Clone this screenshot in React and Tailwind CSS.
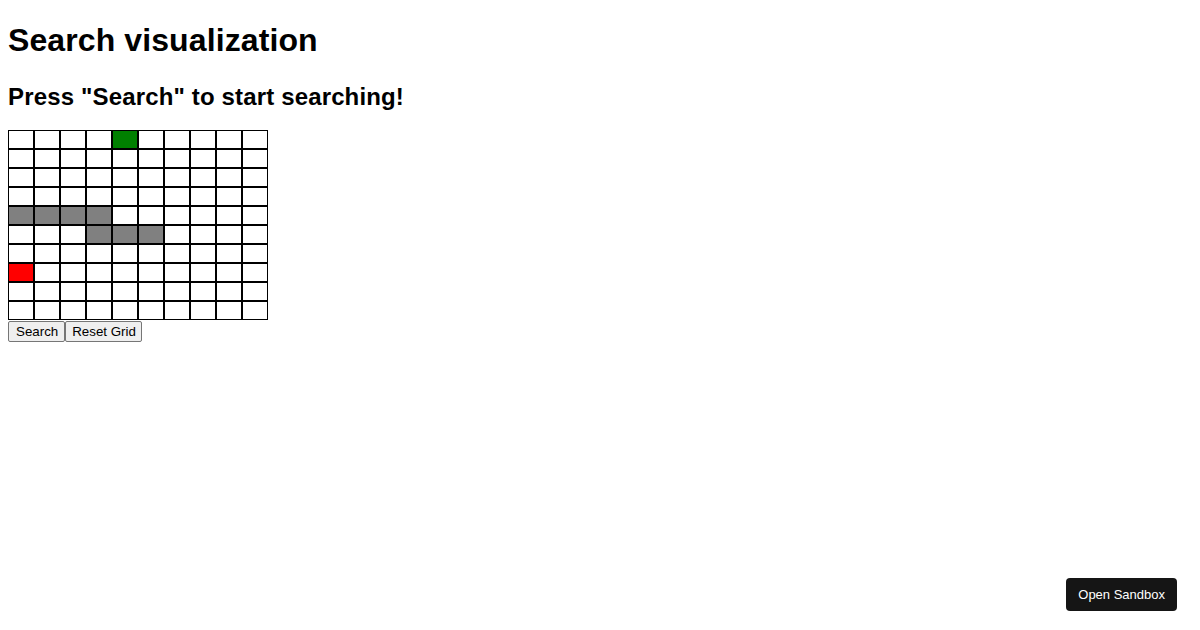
import React from 'react';

const ROWS = 10;
const COLS = 10;

// cell colours keyed by "row-col"
const special = {
    '0-4': 'bg-[#008000]',
    '4-0': 'bg-[#808080]',
    '4-1': 'bg-[#808080]',
    '4-2': 'bg-[#808080]',
    '4-3': 'bg-[#808080]',
    '5-3': 'bg-[#808080]',
    '5-4': 'bg-[#808080]',
    '5-5': 'bg-[#808080]',
    '7-0': 'bg-[#ff0000]',
};

const Grid = () => (
    <div className="flex flex-col">
        {Array.from({ length: ROWS }).map((_, r) => (
            <div key={r} className="flex">
                {Array.from({ length: COLS }).map((_, c) => (
                    <div
                        key={c}
                        className={`w-[26px] h-[19px] border border-black ${special[`${r}-${c}`] || 'bg-white'}`}
                    />
                ))}
            </div>
        ))}
    </div>
);

const App = () => {
    return (
        <div className="min-h-[630px] bg-white text-black p-2 font-['Liberation_Sans',Arial,sans-serif]">
            <h1 className="text-[32px] font-bold leading-[37px] mt-[14px] tracking-[0.1px]">Search visualization</h1>
            <h2 className="text-[24px] font-bold leading-[28px] mt-[24px] mb-[19px] tracking-[0.15px]">Press "Search" to start searching!</h2>

            <Grid />

            <div className="flex mt-px">
                <button className="pl-[7px] pr-[6px] py-[1px] text-[13.33px] leading-[17px] bg-[#efefef] border border-[#767676] rounded-[2px]">
                    Search
                </button>
                <button className="pl-[6px] pr-[5px] py-[1px] text-[13.33px] leading-[17px] bg-[#efefef] border border-[#767676] rounded-[2px]">
                    Reset Grid
                </button>
            </div>

            {/* floating sandbox link */}
            <button className="fixed right-[23px] bottom-[19px] h-[33px] px-[12px] rounded-[4px] bg-[#151515] text-white text-[13px] font-['Liberation_Sans',sans-serif]">
                Open Sandbox
            </button>
        </div>
    );
};

export default App;
